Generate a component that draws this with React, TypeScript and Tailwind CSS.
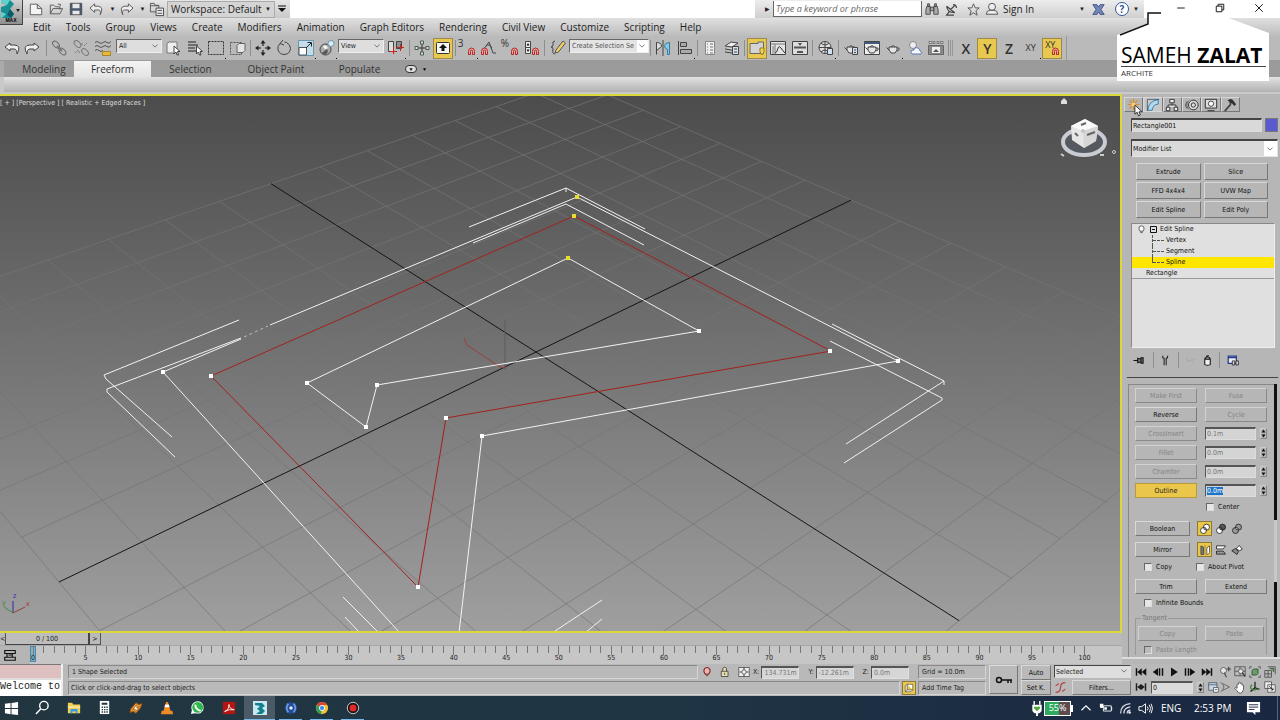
import { ReactNode } from "react";

const MENUS = [
  "Edit",
  "Tools",
  "Group",
  "Views",
  "Create",
  "Modifiers",
  "Animation",
  "Graph Editors",
  "Rendering",
  "Civil View",
  "Customize",
  "Scripting",
  "Help",
];

const ui = "font-['DejaVu_Sans_Condensed','DejaVu_Sans',sans-serif] text-[7px] leading-[10px]";

function Svg({
  children,
  className = "size-[16px]",
  box = "0 0 16 16",
}: {
  children: ReactNode;
  className?: string;
  box?: string;
}) {
  return (
    <svg
      viewBox={box}
      className={`shrink-0 ${className}`}
      fill="none"
      stroke="#444"
      strokeWidth="1"
      aria-hidden="true"
    >
      {children}
    </svg>
  );
}

function ToolButton({
  children,
  label,
  active = false,
  flyout = false,
}: {
  children: ReactNode;
  label: string;
  active?: boolean;
  flyout?: boolean;
}) {
  return (
    <button
      aria-label={label}
      className={`relative flex h-[21px] w-[20px] items-center justify-center ${
        active ? "border border-[#9c8a48] bg-[#e8c84e]" : ""
      }`}
    >
      {children}
      {flyout && <span className="absolute right-0 bottom-0 size-px bg-black" />}
    </button>
  );
}

function Group({ className, children }: { className: string; children: ReactNode }) {
  return <div className={`flex shrink-0 items-center justify-around ${className}`}>{children}</div>;
}

function Sep() {
  return <span className="mx-px h-4 w-px shrink-0 bg-[#8e8e8e]" />;
}

function Chevron({ className = "" }: { className?: string }) {
  return (
    <svg
      viewBox="0 0 8 5"
      className={`pointer-events-none absolute h-[4px] w-[6px] ${className}`}
      fill="none"
      stroke="#555"
    >
      <path d="M.5.5 4 4 7.500.5" />
    </svg>
  );
}

function Combo({
  label,
  value,
  className,
}: {
  label: string;
  value: string;
  className: string;
}) {
  return (
    <div className={`relative shrink-0 ${className}`}>
      <select
        aria-label={label}
        className={`block h-[14px] w-full appearance-none rounded-none border border-[#eee] border-t-[#666] border-l-[#666] bg-[#dedede] pr-3 pl-[2px] text-[#222] ${ui}`}
      >
        <option>{value}</option>
      </select>
      <Chevron className="top-[5px] right-[4px]" />
    </div>
  );
}

/* ---------- title bar ---------- */

function TitleBar() {
  return (
    <header className="flex h-[18px] shrink-0 bg-white font-['Open_Sans',sans-serif] text-[10px] leading-[16px] text-[#222]">
      <div className="flex w-[290px] shrink-0 items-center bg-linear-to-b from-[#e6e6e6] to-[#c9c9c9] pl-[29px]">
        <button aria-label="New" className="w-[20px]">
          <Svg className="size-[14px]">
            <path d="M1.500 2.500h8l5 5v7h-13zM9.500 2.500v5h5" fill="#f4f4f4" stroke="#555" />
          </Svg>
        </button>
        <button aria-label="Open" className="w-[20px]">
          <Svg className="size-[14px]">
            <path d="M1.500 13.500v-10h4l2 2h5v3M1.500 13.500l3-6h11l-3 6zM10 2.500h3v2" stroke="#555" />
          </Svg>
        </button>
        <button aria-label="Save" className="w-[20px]">
          <Svg className="size-[14px]">
            <path d="M1.500 1.500h13v13h-13z" fill="#4a5a72" />
            <path d="M4 2h8v5H4zM4 10h8v4H4z" fill="#e8e8e8" stroke="none" />
          </Svg>
        </button>
        <button aria-label="Undo" className="w-[17px]">
          <Svg className="size-[15px]">
            <path d="m6 2-5 4.500 5 4.500V8.500h4q3 0 2 5 4-8-2-9H6z" fill="#eee" stroke="#555" />
          </Svg>
        </button>
        <span className="w-[13px] text-center text-[6px]">▼</span>
        <button aria-label="Redo" className="w-[17px]">
          <Svg className="size-[15px]">
            <path d="m10 2 5 4.500-5 4.500V8.500H6q-3 0-2 5-4-8 2-9h4z" fill="#eee" stroke="#555" />
          </Svg>
        </button>
        <span className="w-[13px] text-center text-[6px]">▼</span>
        <button aria-label="Project folder" className="w-[18px]">
          <Svg className="size-[15px]">
            <path d="M1.500 1.500h4l1 2h4v7h-9zM1.500 4h9" stroke="#555" />
            <path d="M7.500 6.500h8v8h-8zM9 9h5M9 12h5" fill="#eee" stroke="#444" />
          </Svg>
        </button>
        <button className="flex h-[17px] w-[108px] items-center justify-between border border-[#aaa] bg-[#d4d4d4] px-[3px]">
          Workspace: Default <span className="text-[6px]">▼</span>
        </button>
        <button aria-label="Customize quick access" className="w-[14px]">
          <Svg className="mx-auto size-[8px]" box="0 0 8 8">
            <path d="M0 1h8" stroke="#111" />
            <path d="M0 3h8L4 7z" fill="#111" stroke="none" />
          </Svg>
        </button>
      </div>
      <div className="flex-1" />
      <div className="flex w-[389px] shrink-0 items-center bg-linear-to-b from-[#ededed] to-[#cfcfcf]">
        <button aria-label="Collapse search" className="w-[18px] pl-[6px] text-[6px]">
          ▶
        </button>
        <input
          aria-label="Search"
          placeholder="Type a keyword or phrase"
          className="h-[16px] w-[149px] border border-t-0 border-[#666] bg-white px-[2px] text-[9px] italic placeholder:text-[#666]"
        />
        <button aria-label="Find" className="w-[21px] pl-[3px]">
          <Svg className="size-[14px]">
            <path d="M2 5h4v9H1V9zM10 5h4l1 4v5h-5zM6 6h4v4H6zM3 2h2v3H3zM11 2h2v3h-2z" fill="#aaa" />
          </Svg>
        </button>
        <button aria-label="Communication center" className="w-[20px] pl-[2px]">
          <Svg className="size-[13px]">
            <path d="M2 4q1 8 10 8M2 4l10 8M7 8l5-5M5 11l-3 4h9M10 2q4 0 4 4" strokeWidth="1.500" />
          </Svg>
        </button>
        <button aria-label="Favorites" className="w-[20px]">
          <Svg className="mx-auto size-[13px]">
            <path d="m8 1 2 5h5l-4 3.500 1.500 5.500L8 12l-4.500 3L5 9.500 1 6h5z" />
          </Svg>
        </button>
        <button className="flex items-center gap-[4px] pl-[2px]">
          <Svg className="size-[14px]">
            <circle cx="8" cy="5.500" r="4" fill="#eee" />
            <path d="M1.500 14q0-4 4-4.500h5q4 .5 4 4.500z" fill="#eee" />
          </Svg>
          Sign In
        </button>
        <span className="ml-auto text-[6px]">▼</span>
        <button aria-label="Exchange apps" className="w-[26px]">
          <Svg className="mx-auto size-[13px]">
            <path d="M1 2h5l2 3 2-3h5l-4 6 4 6h-5l-2-3-2 3H1l4-6z" fill="#7486b8" stroke="#334778" />
          </Svg>
        </button>
        <button
          aria-label="Help"
          className="mx-[4px] size-[14px] rounded-full border border-[#31559b] bg-white text-[10px] leading-[12px] font-bold text-[#31559b]"
        >
          ?
        </button>
        <span className="w-[11px] text-[6px]">▼</span>
      </div>
      <div className="flex w-[136px] shrink-0 items-start pt-[3px] pl-[32px]">
        <button aria-label="Minimize" className="w-[39px]">
          <Svg className="size-[10px]">
            <path d="M2 8h12" stroke="#111" strokeWidth="1.500" />
          </Svg>
        </button>
        <button aria-label="Restore" className="w-[39px]">
          <Svg className="size-[10px]">
            <path d="M2 5h9v9H2zM5 5V2h9v9h-3" stroke="#111" strokeWidth="1.500" />
          </Svg>
        </button>
        <button aria-label="Close">
          <Svg className="size-[10px]">
            <path d="m2 2 12 12M14 2 2 14" stroke="#111" strokeWidth="1.500" />
          </Svg>
        </button>
      </div>
    </header>
  );
}

function AppButton() {
  return (
    <button
      aria-label="Application menu"
      className="absolute top-0 left-0 z-10 flex h-[25px] w-[23px] flex-col items-center border-r border-b border-[#444] bg-linear-to-b from-[#d0d0d0] to-[#8f8f8f]"
    >
      <Svg className="h-[18px] w-[22px]" box="0 0 22 18">
        <path d="M1 0h9l4 4-4 5 4 5-3 4H2l-1-3 5-1-5-2V7l6-2-6-2z" fill="#178f92" stroke="none" />
        <path d="M1 0h9l-3 5-6-2zM1 12l5 2-4 4-1-1z" fill="#5fd0cc" stroke="none" />
        <path d="m10 9 4 5-3 4-4-3z" fill="#0b5c66" stroke="none" />
        <path d="M16 9h4l-2 3z" fill="#222" stroke="none" />
      </Svg>
      <span className="font-['Liberation_Sans',sans-serif] text-[5px] leading-[5px] font-bold text-black">
        MAX
      </span>
    </button>
  );
}

/* ---------- main toolbar ---------- */

const teapot = (
  <path
    d="M4 7h8q1 3-2 6H6Q3 10 4 7zM6 7q2-3 4 0M12 8q3-1 2 2l-2 1M4 10 1.500 7.500"
    fill="#e4e4e4"
  />
);

const magnet = (
  <path
    d="M8.500 14.500v-3q0-3.500 3-3.500t3 3.500v3h-2v-3q0-1.500-1-1.500t-1 1.500v3z"
    fill="#f3a6a6"
    stroke="#b32626"
  />
);

function Toolbar() {
  return (
    <div className="flex h-[25px] shrink-0 items-center border-b border-[#999] bg-[#bababa] pl-[2px]">
      <Group className="w-[40px]">
        <ToolButton label="Undo">
          <Svg>
            <path d="m6 3-5 4 5 4V9h4q3 0 3 5 5-9-3-9H6z" fill="#eee" />
          </Svg>
        </ToolButton>
        <ToolButton label="Redo">
          <Svg>
            <path d="m10 3 5 4-5 4V9H6q-3 0-3 5-5-9 3-9h4z" fill="#eee" />
          </Svg>
        </ToolButton>
      </Group>
      <span className="w-[3px]" />
      <Sep />
      <Group className="w-[66px]">
        <ToolButton label="Select and link">
          <Svg>
            <ellipse cx="5" cy="4.500" rx="4" ry="2.500" transform="rotate(45 5 4.500)" stroke="#666" />
            <ellipse cx="11.500" cy="11.500" rx="4" ry="2.500" transform="rotate(45 11.500 11.500)" stroke="#666" />
            <path d="m6 6 5 5" stroke="#777" strokeWidth="2" />
          </Svg>
        </ToolButton>
        <ToolButton label="Unlink selection">
          <Svg>
            <ellipse cx="4.500" cy="4" rx="4" ry="2.500" transform="rotate(45 4.500 4)" stroke="#777" />
            <ellipse cx="12" cy="12" rx="4" ry="2.500" transform="rotate(45 12 12)" stroke="#777" />
            <path d="M9 5V2M11 6l3-3M5 10l-3 3M6 11v3" stroke="#777" strokeDasharray="2 1" />
          </Svg>
        </ToolButton>
        <ToolButton label="Bind to space warp">
          <Svg>
            <path d="M0 2.500q2-2 4 0t4 0 4 0 4-1M0 6.500q2-2 4 0t4 0 4 0 4-1M0 10.500q2-2 4 0t4 0" stroke="#555" />
            <path d="M7.500 11.500h8v4h-8z" fill="#e9b93c" stroke="#a8842a" />
          </Svg>
        </ToolButton>
      </Group>
      <span className="w-[2px]" />
      <Combo label="Selection filter" value="All" className="w-[46px] pb-[4px]" />
      <Group className="w-[87px]">
        <ToolButton label="Select object">
          <Svg>
            <path d="M2 3.500 4 2h8v9l-2 2H2z" fill="#eee" stroke="#777" />
            <path d="M9 6v8l2-2 1 3h1.500l-1-3.500H15z" fill="#fff" />
          </Svg>
        </ToolButton>
        <ToolButton label="Select by name">
          <Svg>
            <path d="M1 2h8M1 5h10M1 8h7M1 11h8" strokeWidth="1.500" stroke="#555" />
            <path d="M9.500 6v8l2-2 1 3H14l-1-3.500h2.500z" fill="#fff" />
          </Svg>
        </ToolButton>
        <ToolButton label="Rectangular selection" flyout>
          <Svg>
            <path d="M.5 1.500h15v13H.5z" strokeDasharray="2 1" stroke="#333" />
          </Svg>
        </ToolButton>
        <ToolButton label="Window crossing">
          <Svg>
            <path d="M.5 2.500h11v12H.5z" strokeDasharray="2 1" stroke="#555" />
            <path d="M7 5.500 9 3.500h6v7l-2 2H7z" fill="#e4e4e4" stroke="#666" />
          </Svg>
        </ToolButton>
      </Group>
      <Sep />
      <Group className="w-[86px]">
        <ToolButton label="Move">
          <Svg>
            <path d="M8 3v3M8 10v3M3 8h3M10 8h3" strokeWidth="1.500" />
            <path d="m8 0 2.500 3.500h-5zM8 16l2.500-3.500h-5zM0 8l3.500-2.500v5zM16 8l-3.500-2.500v5z" fill="#222" stroke="none" />
          </Svg>
        </ToolButton>
        <ToolButton label="Rotate">
          <Svg>
            <path d="M4 3.500q-3 3-2 6.500 2 5 7 4.500 5-1 5.500-6 0-4-4-6l-2-.5M7 0 4 3.500 8 5" stroke="#444" />
          </Svg>
        </ToolButton>
        <ToolButton label="Scale" flyout>
          <Svg>
            <path d="M.5.5h15v15H.5z" fill="#c3dcea" stroke="#6b97ae" />
            <path d="M1 7.500h7.500V15H1z" fill="#fff" stroke="#555" />
            <path d="m8 8 5-5M9.500 2.500h4v4" stroke="#222" />
          </Svg>
        </ToolButton>
        <ToolButton label="Place" flyout>
          <Svg>
            <circle cx="6.500" cy="9.500" r="5.500" fill="#aaa" stroke="#444" />
            <path d="M4 6q3-2 5 2-4 3-5-2z" fill="#f5f5f5" stroke="none" />
            <path d="M8 9q2 3-1 5-3 1-4-1z" fill="#555" stroke="none" />
            <circle cx="12" cy="3.500" r="3" fill="#d9ecf5" stroke="#6b97ae" />
          </Svg>
        </ToolButton>
      </Group>
      <Combo label="Reference coordinate system" value="View" className="w-[46px] pb-[4px]" />
      <Group className="w-[24px]">
        <ToolButton label="Pivot center" flyout>
          <Svg>
            <path d="M.5 1.500h5v10h-5z" fill="#ddd" />
            <path d="M8.500 1.500h5v7h-5z" fill="#8f8f8f" />
            <path d="M5.500 7v7M2 11.500h7M12.500 4v7M9 7.500h7" stroke="#c22" />
          </Svg>
        </ToolButton>
      </Group>
      <Sep />
      <Group className="w-[43px]">
        <ToolButton label="Manipulate">
          <Svg>
            <path d="M8 3v10M3 8h10" stroke="#333" />
            <path d="M6.500 1h3v3h-3zM6.500 12h3v3h-3zM1 6.500h3v3H1zM12 6.500h3v3h-3z" fill="#ddd" stroke="#456145" />
          </Svg>
        </ToolButton>
        <ToolButton label="Keyboard shortcut override" active>
          <Svg>
            <rect x="1.500" y="2.500" width="13" height="11" rx="1" fill="#f5f5f5" stroke="#333" />
            <path d="m8 4 4 4H9.500v3h-3V8H4z" fill="#111" stroke="none" />
          </Svg>
        </ToolButton>
      </Group>
      <Sep />
      <Group className="w-[86px] font-['Open_Sans',sans-serif] text-[10px] text-[#333]">
        <ToolButton label="Snaps toggle" flyout>
          <span className="absolute top-[-2px] left-0">3</span>
          <Svg>{magnet}</Svg>
        </ToolButton>
        <ToolButton label="Angle snap">
          <Svg>
            <path d="m2 10 6-8 4 11h3M5 6q3-3 6 2" />
            <g transform="translate(-8 0)">{magnet}</g>
          </Svg>
        </ToolButton>
        <ToolButton label="Percent snap">
          <span className="absolute top-[-2px] left-0">%</span>
          <Svg>{magnet}</Svg>
        </ToolButton>
        <ToolButton label="Spinner snap">
          <Svg>
            <path d="M1.500 1.500h5v6h-5zM1.500 7.500h5v6h-5z" fill="#eee" />
            <path d="m4 3 1.500 2.500h-3zM4 12 2.500 9.500h3z" fill="#111" stroke="none" />
            {magnet}
          </Svg>
        </ToolButton>
      </Group>
      <Sep />
      <Group className="w-[23px]">
        <ToolButton label="Edit named selection sets">
          <Svg>
            <path d="M5 1Q2 1 3 5q0 2-2 2 2 0 2 2-1 5 2 5" />
            <path d="m6 10 7-9 2.500 2-7 9L5 13z" fill="#f0cf60" stroke="#555" />
          </Svg>
        </ToolButton>
      </Group>
      <div className="relative w-[80px] pb-[4px]">
        <input
          aria-label="Named selection sets"
          placeholder="Create Selection Se"
          className={`block h-[14px] w-full border border-[#eee] border-t-[#666] border-l-[#666] bg-[#e4e4e4] pr-3 pl-[2px] placeholder:text-[#555] ${ui}`}
        />
        <span className="absolute top-px right-px h-[12px] w-[11px] bg-white" />
        <Chevron className="top-[5px] right-[4px]" />
      </div>
      <Sep />
      <Group className="w-[44px]">
        <ToolButton label="Mirror">
          <Svg>
            <path d="M1.500 2.500v12M1.500 2.500q5 0 5 4l-5 4" fill="#ddd" />
            <path d="M14.500 2.500v12h-2v-5q-3-1-3-4 1-3 5-3z" fill="#8cc7e2" stroke="#2e7da3" />
            <path d="M8 0v16" />
          </Svg>
        </ToolButton>
        <ToolButton label="Align" flyout>
          <Svg>
            <path d="M1.500 1v14" />
            <path d="M3.500 2.500h6v4h-6zM3.500 9.500h11v4h-11z" fill="#aaa" />
          </Svg>
        </ToolButton>
      </Group>
      <Sep />
      <Group className="w-[44px]">
        <ToolButton label="Scene explorer">
          <Svg>
            <path d="M3.500 1.500h9v13h-9z" fill="#eee" stroke="#888" />
            <path d="M5 4h1M5 7h1M5 10h1M5 13h1M8 4h3M8 7h3M8 10h3M8 13h3" stroke="#777" />
          </Svg>
        </ToolButton>
        <ToolButton label="Layer explorer">
          <Svg>
            <path d="m1 6 6-4 7 1-6 4zM1 9l7 1 3-2M1 12l7 1" fill="#eee" />
            <path d="M8.500 6.500h6v8h-6zM10 9h3M10 12h3" fill="#d5dff0" />
          </Svg>
        </ToolButton>
      </Group>
      <Sep />
      <Group className="w-[65px]">
        <ToolButton label="Toggle ribbon" active>
          <Svg>
            <path d="M1 3.500h8V2h5.500v11.500H1z" fill="#d4d4d4" stroke="#666" />
            <path d="M11 8h4v4l-2 3-2-3z" fill="#f2d657" stroke="#8e7a22" />
          </Svg>
        </ToolButton>
        <ToolButton label="Curve editor">
          <Svg>
            <path d="M.5 1.500h15v13H.5z" fill="#e4e4e4" />
            <path d="M1 4h14M5 4v10M3 6v8" stroke="#777" />
            <path d="M5 13q2 0 3-5 1-3 3 0t4 5" stroke="#333" />
          </Svg>
        </ToolButton>
        <ToolButton label="Schematic view">
          <Svg>
            <path d="M.5 1.500h15v13H.5z" fill="#ddd" />
            <path d="M2 6.500h12v2H2zM5 11h6v2H5zM6 3h4L8 6z" fill="#555" stroke="none" />
          </Svg>
        </ToolButton>
      </Group>
      <Sep />
      <Group className="w-[23px]">
        <ToolButton label="Material editor" flyout>
          <Svg>
            <circle cx="7" cy="7.500" r="6" fill="#ddd" />
            <path d="M1 7.500h12M7 1v13M3 3q4 4 8 0M3 12q4-4 8 0" />
            <path d="M9.500 8.500h5v6h-5z" fill="#cfe0f2" />
          </Svg>
        </ToolButton>
      </Group>
      <Sep />
      <Group className="w-[107px]">
        <ToolButton label="Render setup">
          <Svg>
            {teapot}
            <path d="M9.500 7.500h5v7h-5zM11 10h2M11 12.500h2" fill="#cfe0f2" />
          </Svg>
        </ToolButton>
        <ToolButton label="Rendered frame window">
          <Svg>
            <path d="M.5 1.500h15v13H.5z" fill="#eee" />
            <path d="M.5 3h15" strokeWidth="2" stroke="#435a7a" />
            {teapot}
          </Svg>
        </ToolButton>
        <ToolButton label="Render production" flyout>
          <Svg>{teapot}</Svg>
        </ToolButton>
        <ToolButton label="Render in cloud">
          <Svg>
            <circle cx="6" cy="5" r="3.500" fill="#eee" stroke="#888" />
            <path d="M5 14q-3-4 2-4 1-4 4-2 2 1 2 3 3 1 1 3z" fill="#f4f8ff" stroke="#5b79b8" />
          </Svg>
        </ToolButton>
        <ToolButton label="Render gallery">
          <Svg>
            <path d="M.5 5.500h15v9H.5z" fill="#888" stroke="#666" />
            <path d="M1 1.500h3v2H1zM5 1.500h2v2H5zM9 1.500h2v2H9zM12.500 1.500H15v2h-2.500z" fill="#ddd" stroke="#777" />
            <path d="M4 7h8v6H4z" fill="#eee" stroke="none" />
            <path d="m5 12 3-3 3 3z" fill="#555" stroke="none" />
          </Svg>
        </ToolButton>
      </Group>
      <Sep />
      <span className="mr-[2px] h-4 w-[3px] border-x border-[#999]" />
      <Group className="w-[108px] font-['Open_Sans',sans-serif] text-[14px] font-semibold text-[#333]">
        <ToolButton label="Restrict to X">X</ToolButton>
        <ToolButton label="Restrict to Y" active>
          Y
        </ToolButton>
        <ToolButton label="Restrict to Z">Z</ToolButton>
        <ToolButton label="Restrict to XY plane" flyout>
          <span className="text-[9px] font-normal">XY</span>
        </ToolButton>
        <ToolButton label="Snaps use axis constraints" active>
          <span className="absolute top-[-1px] left-[2px] text-[9px] leading-[13px] font-normal">XY</span>
          <Svg>{magnet}</Svg>
        </ToolButton>
      </Group>
      <span className="ml-[3px] h-[24px] w-px bg-[#999]" />
    </div>
  );
}

function Ribbon() {
  const tab = "h-full text-center";
  return (
    <>
      <div className="flex h-[16px] shrink-0 items-stretch border-l-4 border-[#aaa] bg-[#9b9b9b] font-['Open_Sans',sans-serif] text-[10px] leading-[16px] text-[#333]">
        <button className={`${tab} w-[70px] pl-[10px]`}>Modeling</button>
        <button className={`${tab} w-[77px] bg-linear-to-b from-[#f4f4f4] to-[#e4e4e4]`}>Freeform</button>
        <button className={`${tab} w-[79px]`}>Selection</button>
        <button className={`${tab} w-[92px]`}>Object Paint</button>
        <button className={`${tab} w-[75px]`}>Populate</button>
        <button aria-label="Ribbon display" className="flex items-center gap-[5px] pl-[8px] text-[5px] text-black">
          <span className="flex h-[8px] w-[12px] items-center justify-center rounded-sm border border-[#333] bg-[#ddd]">
            ▼
          </span>
          ▼
        </button>
      </div>
      <div className="h-[17px] shrink-0 border-b-2 border-l-4 border-[#c9c9c9] bg-linear-to-b from-[#e2e2e2] to-[#b2b2b2]" />
    </>
  );
}

/* ---------- viewport ---------- */

// Perspective projection of a ground plane point, u and v in grid cells (-7..7).
function project(u: number, v: number) {
  const a = u / 7;
  const b = v / 7;
  const w = 1 - 0.2297 * a - 0.2045 * b;
  return [(536 + 202.8 * a - 489.1 * b) / w, (352 + 126.1 * a + 111 * b) / w];
}

function gridLine(u1: number, v1: number, u2: number, v2: number) {
  const [x1, y1] = project(u1, v1);
  const [x2, y2] = project(u2, v2);
  return `M${x1.toFixed(1)} ${y1.toFixed(1)}L${x2.toFixed(1)} ${y2.toFixed(1)}`;
}

const STEPS = Array.from({ length: 15 }, (_, i) => i - 7);
const GRID = STEPS.filter((n) => n !== 0)
  .map((n) => gridLine(n, -7, n, 7) + gridLine(-7, n, 7, n))
  .join("");
const AXES = gridLine(0, -7, 0, 7) + gridLine(-7, 0, 7, 0);

const KNOTS = [
  [163, 372],
  [211, 376],
  [307, 383],
  [366, 427],
  [377, 385],
  [699, 331],
  [830, 351],
  [898, 361],
  [446, 418],
  [482, 436],
  [418, 587],
];
const FIRST_KNOTS = [
  [577, 197],
  [574, 216],
  [568, 258],
];

function Viewport() {
  return (
    <section className="relative min-h-0 flex-1 overflow-hidden border-y-2 border-r-2 border-[#dcd83c] bg-linear-to-b from-[#4c4c4c] to-[#9f9f9f]">
      <svg
        viewBox="0 96 1120 535"
        preserveAspectRatio="xMidYMid slice"
        className="block h-full w-full"
        fill="none"
        strokeWidth="1"
      >
        <path d={GRID} stroke="#757575" strokeOpacity="0.700" />
        <path d={AXES} stroke="#151515" />
        <path d="M505 320v50" stroke="#5c5c5c" />
        <path d="m464 338 3 7 33 22 6 1" stroke="#9a3f3a" />
        <g stroke="#f2f2f2">
          <path d="m469 227 97-39 79 41M473 243l93-39 78 41M566 188v4" />
          <path d="m239 320-135 55 2 4 66 58M241 338l-134 51v3l68 65" />
          <path d="m832 324 112 57v4M944 381l-98 63M830 341l112 57v2l-98 63" />
          <path d="m343 597 36 36M345 617l15 16M602 600l-50 33M602 619l-17 14" />
          <path d="m400 633-237-261 78-33M270 325l307-128 321 164-416 75-23 197" />
          <path d="m244 337 24-11" strokeDasharray="3 3" strokeOpacity=".6" />
          <path d="m568 258 131 73-322 54-11 42-59-44z" />
        </g>
        <path d="m574 216 257 135-385 67-28 169-207-211z" stroke="#a3211c" />
        {KNOTS.map(([x, y]) => (
          <rect key={`${x}-${y}`} x={x - 2} y={y - 2} width="4" height="4" fill="#fff" />
        ))}
        {FIRST_KNOTS.map(([x, y]) => (
          <rect key={`${x}-${y}`} x={x - 2} y={y - 2} width="4" height="4" fill="#e8dc2c" />
        ))}
      </svg>
      <p className={`absolute top-[2px] left-0 text-[#ddd] ${ui}`}>
        [ + ] [Perspective ] [ Realistic + Edged Faces ]
      </p>
      {/* view cube */}
      <svg viewBox="0 0 66 66" className="absolute top-0 right-0 size-[66px]" fill="none">
        <path d="M7 8V5l3-3 3 3v3z" fill="#ddd" />
        <ellipse cx="30" cy="46" rx="21" ry="13" fill="#555a60" stroke="#c9ccd2" strokeWidth="4" />
        <path d="m17 30 14-7 13 7-2 15-12 7-12-8z" fill="#e6e6e6" />
        <path d="m17 30 12 5 15-5-13-7z" fill="#fafafa" />
        <path d="m29 35 1 17 12-7 2-15z" fill="#d6d6d6" />
        <path d="m27 29 5-2M33 39l8-3M21 37l3 3" stroke="#666" strokeWidth="2" />
        <circle cx="29" cy="35" r="2" fill="#c4c4c4" />
        <circle cx="60" cy="56" r="1.500" stroke="#ccc" />
        <path d="m7 58 3 2M46 59h4" stroke="#ccc" strokeWidth="2" />
      </svg>
      {/* world axis tripod */}
      <svg viewBox="0 0 34 28" className="absolute bottom-[12px] left-0 h-[28px] w-[34px]" fill="none">
        <path d="M13 22V10" stroke="#2c2caa" />
        <path d="m13 22 12-6" stroke="#a03a3a" />
        <path d="m13 22-9-6" stroke="#3b8f3b" />
        <g fontSize="7" fontFamily="DejaVu Sans Condensed, DejaVu Sans, sans-serif">
          <text x="13" y="7" fill="#2c2caa">z</text>
          <text x="26" y="15" fill="#b03030">x</text>
          <text x="2" y="14" fill="#2f8f2f">y</text>
        </g>
      </svg>
    </section>
  );
}

function TimeSlider() {
  return (
    <div className={`flex h-[12px] shrink-0 items-stretch bg-[#b9b9b9] text-[#222] ${ui}`}>
      <button aria-label="Previous frame" className="w-[6px] border-r border-[#555]">
        &lt;
      </button>
      <button className="w-[84px] border-r-2 border-b border-[#444] bg-[#bdbdbd]">0 / 100</button>
      <button aria-label="Next frame" className="w-[11px] border-r border-b border-[#555]">
        &gt;
      </button>
    </div>
  );
}

function TrackBar() {
  const frames = Array.from({ length: 101 }, (_, i) => i);
  return (
    <div className={`flex h-[19px] shrink-0 border-t border-[#a5a5a5] bg-[#c6c6c6] text-[#222] ${ui}`}>
      <button aria-label="Mini curve editor" className="flex w-[30px] items-center bg-[#b5b5b5] pl-[3px]">
        <Svg className="h-[12px] w-[14px]">
          <path d="M1 2h14v4H1zM1 11h14v4H1zM4 6v5M11 6v5M6 8h4" stroke="#111" strokeWidth="1.500" />
        </Svg>
      </button>
      <div className="relative mr-[37px] ml-[3px] flex flex-1 justify-between">
        <span className="absolute top-0 left-[-3px] h-[16px] w-[6px] border border-[#4e86a3] bg-[#7fb3cf]" />
        {frames.map((f) => (
          <div key={f} className="relative flex w-0 flex-col items-center">
            <span className={`w-px bg-[#777] ${f % 5 === 0 ? "h-[9px]" : "h-[7px]"}`} />
            {f % 5 === 0 && <span className="-mt-px leading-[9px]">{f}</span>}
          </div>
        ))}
      </div>
    </div>
  );
}

/* ---------- command panel ---------- */

function PanelButton({
  children,
  className = "",
  state = "normal",
}: {
  children: ReactNode;
  className?: string;
  state?: "normal" | "disabled" | "active";
}) {
  const tone =
    state === "active"
      ? "bg-[#eac64a] text-[#222] border-[#b89a3a]"
      : state === "disabled"
        ? "text-[#858585] border-t-[#d2d2d2] border-l-[#d2d2d2] border-r-[#8a8a8a] border-b-[#8a8a8a]"
        : "text-[#111] border-t-[#d8d8d8] border-l-[#d8d8d8] border-r-[#777] border-b-[#777]";
  return (
    <button disabled={state === "disabled"} className={`h-[15px] border text-center ${tone} ${className}`}>
      {children}
    </button>
  );
}

function Spinner() {
  return (
    <button aria-label="Adjust value" className="h-[11px] w-[7px] border border-[#ccc] border-r-[#888] border-b-[#888]">
      <svg viewBox="0 0 5 9" className="h-[9px] w-[5px]">
        <path d="m2.500.5 2 3h-4zM2.500 8.500l-2-3h4z" fill="#111" />
      </svg>
    </button>
  );
}

function Check({ label, disabled = false }: { label: string; disabled?: boolean }) {
  return (
    <label className={`flex items-center gap-[4px] ${disabled ? "text-[#858585]" : "text-[#111]"}`}>
      <input
        type="checkbox"
        disabled={disabled}
        className={`size-[8px] appearance-none border border-[#ddd] border-t-[#666] border-l-[#666] ${
          disabled ? "bg-[#bbb]" : "bg-[#e6e6e6]"
        }`}
      />
      {label}
    </label>
  );
}

function CommandTab({ label, active = false, children }: { label: string; active?: boolean; children: ReactNode }) {
  return (
    <button
      role="tab"
      aria-label={label}
      aria-selected={active}
      className={`relative flex h-[15px] flex-1 items-center justify-center border border-[#d8d8d8] border-r-[#777] ${
        active ? "bg-[#c9c9c9]" : "border-b-[#777] bg-[#b6b6b6]"
      }`}
    >
      {children}
    </button>
  );
}

const SPLINE_ROWS = [
  { left: "Make First", right: "Fuse" },
  { left: "Reverse", right: "Cycle", leftState: "normal" as const },
  { left: "CrossInsert", value: "0.1m" },
  { left: "Fillet", value: "0.0m" },
  { left: "Chamfer", value: "0.0m" },
  { left: "Outline", value: "0.0m", leftState: "active" as const },
];

const rings = (a: string, b: string, c: string) => (
  <Svg className="size-[12px]">
    <circle cx="10" cy="5.500" r="4" fill={b} stroke="#111" />
    <circle cx="6" cy="10" r="4" fill={a} stroke="#111" />
    <path d="M6 6q4 0 4 3.500-4 0-4-3.500z" fill={c} stroke="#111" />
  </Svg>
);

function IconToggle({ label, active = false, children }: { label: string; active?: boolean; children: ReactNode }) {
  return (
    <button
      aria-label={label}
      className={`flex h-[15px] w-[15px] items-center justify-center ${
        active ? "border border-[#8b7a3a] bg-[#eac64a]" : ""
      }`}
    >
      {children}
    </button>
  );
}

function CommandPanel() {
  const stackRow = "flex h-[11px] items-center leading-[11px]";
  return (
    <aside className={`flex w-[158px] shrink-0 flex-col bg-[#b6b6b6] text-[#111] ${ui}`}>
      <div role="tablist" className="mt-[3px] mr-[40px] ml-[2px] flex h-[15px] shrink-0">
        <CommandTab label="Create">
          <Svg className="size-[13px]">
            <path d="M8 1v14M1 8h14M3 3l10 10M13 3 3 13" stroke="#d98a22" strokeWidth="1.500" />
            <circle cx="8" cy="8" r="2.500" fill="#f7cf7c" stroke="none" />
          </Svg>
          <svg viewBox="0 0 10 14" className="absolute top-[6px] left-[9px] z-10 h-[13px] w-[9px]">
            <path d="M1 1v10l2.500-2 1.500 4 2-1-1.500-3.500H9z" fill="#fff" stroke="#222" />
          </svg>
        </CommandTab>
        <CommandTab label="Modify" active>
          <Svg className="size-[14px]">
            <path d="M2 14Q3 3 14 2v5Q8 7 7 14z" fill="#b5d9ec" stroke="#2b78a8" />
            <path d="M1.500 15V1.500H15" stroke="#456" />
          </Svg>
        </CommandTab>
        <CommandTab label="Hierarchy">
          <Svg className="size-[14px]">
            <path d="M5.500 1.500h5v4h-5zM1.500 10.500h4v4h-4zM10.500 10.500h4v4h-4zM8 6v2M3.500 10V8h9v2" fill="#eee" stroke="#222" />
          </Svg>
        </CommandTab>
        <CommandTab label="Motion">
          <Svg className="size-[14px]">
            <circle cx="9.500" cy="8" r="5.500" fill="#ddd" stroke="#222" />
            <circle cx="9.500" cy="8" r="2.500" stroke="#222" />
            <path d="M4 3Q0 8 4 13M2 4Q-1 8 2 12" stroke="#555" />
          </Svg>
        </CommandTab>
        <CommandTab label="Display">
          <Svg className="size-[14px]">
            <path d="M1.500 1.500h13v10h-13zM4 14.500h8" fill="#ddd" stroke="#222" />
            <circle cx="8" cy="6.500" r="3" fill="#fff" stroke="#333" />
          </Svg>
        </CommandTab>
        <CommandTab label="Utilities">
          <Svg className="size-[14px]">
            <path d="m2 15 7-8" stroke="#444" strokeWidth="2" />
            <path d="M5 3q3-3 6-1l4 5-2 2-3-3-2 1-1-3z" fill="#333" stroke="none" />
          </Svg>
        </CommandTab>
      </div>

      <div className="mt-[6px] mr-[2px] ml-[9px] flex h-[14px] shrink-0 justify-between">
        <input
          aria-label="Object name"
          defaultValue="Rectangle001"
          className="w-[131px] border border-[#ddd] border-t-2 border-t-[#444] border-l-[#444] bg-[#d9d9d9] pl-px"
        />
        <button aria-label="Object color" className="w-[13px] border border-[#777] bg-[#5a5ad0]" />
      </div>
      <div className="relative mt-[7px] mr-[2px] ml-[9px] shrink-0">
        <select
          aria-label="Modifier list"
          className="block h-[18px] w-full appearance-none rounded-none border border-[#e4e4e4] border-t-2 border-t-[#444] border-l-[#444] bg-[#dadada] pl-px"
        >
          <option>Modifier List</option>
        </select>
        <span className="absolute top-[2px] right-px h-[15px] w-[13px] bg-white" />
        <Chevron className="top-[8px] right-[5px]" />
      </div>

      <div className="mt-[6px] mr-[12px] ml-[14px] grid shrink-0 grid-cols-2 gap-x-[3px] gap-y-[2px]">
        {["Extrude", "Slice", "FFD 4x4x4", "UVW Map", "Edit Spline", "Edit Poly"].map((m) => (
          <PanelButton key={m} className="h-[17px]">
            {m}
          </PanelButton>
        ))}
      </div>

      <div className="mt-[5px] mr-[5px] ml-[9px] h-[125px] shrink-0 border border-[#eee] border-t-[#888] border-l-[#888] bg-[#e0e0e0]">
        <div className={`${stackRow} gap-[3px] pl-[5px]`}>
          <Svg className="mr-px size-[9px]">
            <path d="M5 11q0-2-1.500-3.500-1-6 4.500-6t4.500 6Q11 9 11 11zM6 13.500h4" fill="#fff" strokeWidth="1.500" />
          </Svg>
          <Svg className="size-[7px]" box="0 0 7 7">
            <path d="M.5.5h6v6h-6zM2 3.500h3" stroke="#111" />
          </Svg>
          Edit Spline
        </div>
        {["Vertex", "Segment", "Spline"].map((s) => (
          <div key={s} className={`${stackRow} pl-[20px] ${s === "Spline" ? "bg-[#ffe500]" : ""}`}>
            <span className={`border-l border-dashed border-[#555] ${s === "Spline" ? "-mt-[5px] h-[6px]" : "h-full"}`} />
            <span className="mr-[2px] w-[11px] border-t border-dashed border-[#555]" />
            {s}
          </div>
        ))}
        <div className={`${stackRow} border-b border-[#999] pl-[14px]`}>Rectangle</div>
      </div>

      <div className="mt-[4px] mr-[40px] ml-[10px] flex h-[16px] shrink-0 items-center justify-between">
        <button aria-label="Pin stack">
          <Svg className="h-[11px] w-[14px]">
            <path d="M0 8h6M6 4v8M6 5.500h5v5H6zM11 4h3v8h-3z" fill="#777" stroke="#111" strokeWidth="1.500" />
          </Svg>
        </button>
        <Sep />
        <button aria-label="Show end result">
          <Svg className="size-[11px]">
            <path d="M4 1v3l2 1v10M11 1v3L9 5v10" stroke="#222" strokeWidth="1.500" />
          </Svg>
        </button>
        <Sep />
        <button aria-label="Make unique" disabled>
          <Svg className="size-[10px]">
            <path d="m1 5 3 6 3-4 3 4 4-6" stroke="#888" strokeDasharray="2 2" />
          </Svg>
        </button>
        <button aria-label="Remove modifier">
          <Svg className="size-[11px]">
            <path d="M4 6h8v8q-4 2-8 0zM4 5q4-4 8 0M6 2l4-1" fill="#eee" stroke="#111" strokeWidth="1.500" />
          </Svg>
        </button>
        <Sep />
        <button aria-label="Configure modifier sets">
          <Svg className="size-[13px]">
            <path d="M1.500 2.500h10v9h-10zM1.500 4.500h10" fill="#eee" stroke="#223a8c" strokeWidth="1.500" />
            <path d="M6.500 8.500h3v5h-3zM11 8.500h3v5h-3z" fill="#ddd" stroke="#222" />
          </Svg>
        </button>
      </div>
      <div className="mt-[9px] mr-[2px] ml-[5px] h-px shrink-0 border-b border-[#444]" />

      <div className="mt-[6px] ml-[6px] flex min-h-0 flex-1">
        <div className="min-w-0 flex-1 border-t border-l border-[#888] pr-[7px] pl-[6px]">
          <div className="mt-[3px] flex flex-col gap-[4px]">
            {SPLINE_ROWS.map((r) => (
              <div key={r.left} className="flex items-center gap-[8px]">
                <PanelButton className="w-[62px]" state={r.leftState ?? "disabled"}>
                  {r.left}
                </PanelButton>
                {r.right ? (
                  <PanelButton className="w-[62px]" state="disabled">
                    {r.right}
                  </PanelButton>
                ) : (
                  <div className="flex items-center gap-[4px]">
                    <input
                      aria-label={`${r.left} amount`}
                      defaultValue={r.value}
                      autoFocus={r.left === "Outline"}
                      onFocus={(e) => e.target.select()}
                      className="h-[13px] w-[51px] border border-[#ddd] border-t-2 border-t-[#555] border-l-[#555] bg-[#d4d4d4] pl-px text-[#777] outline-none selection:bg-[#1b74c9] selection:text-white"
                    />
                    <Spinner />
                  </div>
                )}
              </div>
            ))}
          </div>
          <div className="mt-[4px] pl-[71px]">
            <Check label="Center" />
          </div>
          <div className="mt-[9px] flex items-center gap-[7px]">
            <PanelButton className="w-[55px]">Boolean</PanelButton>
            <div className="flex gap-px">
              <IconToggle label="Union" active>
                {rings("#fff", "#fff", "#fff")}
              </IconToggle>
              <IconToggle label="Subtraction">{rings("#fff", "#555", "#888")}</IconToggle>
              <IconToggle label="Intersection">{rings("#999", "#999", "#fff")}</IconToggle>
            </div>
          </div>
          <div className="mt-[6px] flex items-center gap-[7px]">
            <PanelButton className="w-[55px]">Mirror</PanelButton>
            <div className="flex gap-px">
              <IconToggle label="Mirror horizontally" active>
                <Svg className="size-[12px]">
                  <path d="M2.500 2.500 6 4v10H2.500z" fill="#777" />
                  <path d="M8 1v14" stroke="#8b7a3a" />
                  <path d="M14 2.500 10.500 5v9q3.500 0 3.500-3z" fill="#fff" />
                </Svg>
              </IconToggle>
              <IconToggle label="Mirror vertically">
                <Svg className="size-[12px]">
                  <path d="M2 2.500h12l-3 4H2z" fill="#fff" stroke="#111" />
                  <path d="M2 13.500h12l-3-4H2z" fill="#999" stroke="#111" />
                </Svg>
              </IconToggle>
              <IconToggle label="Mirror both">
                <Svg className="size-[12px]">
                  <path d="m7 6 4-4 4 5-4 2z" fill="#fff" stroke="#111" />
                  <path d="m1 9 5-3 4 4-2 4z" fill="#888" stroke="#111" />
                </Svg>
              </IconToggle>
            </div>
          </div>
          <div className="mt-[5px] flex gap-[24px] pl-[9px]">
            <Check label="Copy" />
            <Check label="About Pivot" />
          </div>
          <div className="mt-[7px] flex gap-[8px]">
            <PanelButton className="w-[62px]">Trim</PanelButton>
            <PanelButton className="w-[62px]">Extend</PanelButton>
          </div>
          <div className="mt-[4px] pl-[9px]">
            <Check label="Infinite Bounds" />
          </div>
          <fieldset className="mt-[5px] border border-b-0 border-[#999] px-[2px]">
            <legend className="ml-[3px] px-px text-[#777]">Tangent</legend>
            <div className="mt-[3px] flex gap-[8px]">
              <PanelButton className="flex-1" state="disabled">
                Copy
              </PanelButton>
              <PanelButton className="flex-1" state="disabled">
                Paste
              </PanelButton>
            </div>
            <div className="mt-[4px] pl-[6px]">
              <Check label="Paste Length" disabled />
            </div>
          </fieldset>
        </div>
        <div className="mr-[3px] flex w-[3px] flex-col bg-[#111]">
          <span className="mt-[136px] h-[62px] bg-[#c8c8c8]" />
        </div>
      </div>
      <div className="mb-[5px] h-[2px] shrink-0 bg-[#ddd]" />
    </aside>
  );
}

/* ---------- status bar ---------- */

function Coord({ axis, value }: { axis: string; value: string }) {
  return (
    <label className="flex items-center gap-[2px]">
      {axis}:
      <input
        defaultValue={value}
        className="h-[13px] w-[38px] border border-[#e0e0e0] border-t-2 border-t-[#555] border-l-[#555] bg-[#d6d6d6] pl-[2px] text-[#777]"
      />
    </label>
  );
}

const PLAY_ICONS = [
  { label: "Go to start", d: "M1 3h2v10H1zM9 3v10L3 8zM15 3v10L9 8z" },
  { label: "Previous frame", d: "M8 3v10L1 8zM9 3h2v10H9zM13 3h2v10h-2z" },
  { label: "Play", d: "M4 2v12l9-6z" },
  { label: "Next frame", d: "M8 3v10l7-5zM1 3h2v10H1zM5 3h2v10H5z" },
  { label: "Go to end", d: "M13 3h2v10h-2zM7 3v10l6-5zM1 3v10l6-5z" },
];

function StatusBar() {
  const sunk = "border border-[#d6d6d6] border-t-[#888] border-l-[#888]";
  return (
    <div className={`flex h-[32px] shrink-0 bg-[#b9b9b9] text-[#222] ${ui}`}>
      <div className="flex w-[63px] shrink-0 flex-col border-r-2 border-[#eee] font-['Liberation_Mono',monospace] text-[10px]">
        <div className="h-[14px] border-t border-[#777] bg-[#dfc0c0]" />
        <div className="h-[18px] border-t-2 border-[#ddd] bg-white leading-[14px] whitespace-nowrap">
          Welcome to
        </div>
      </div>
      <div className="ml-[5px] flex min-w-0 flex-1 flex-col justify-between py-px">
        <div className="flex items-center">
          <p className={`h-[14px] flex-1 pl-[3px] leading-[13px] ${sunk}`}>1 Shape Selected</p>
          <div className="flex w-[55px] shrink-0 items-center justify-around">
            <button aria-label="Adaptive degradation">
              <Svg className="size-[12px]">
                <path d="M6 11Q3 8 4 5q1-3 4-3t4 3-2 6zM7 13h2" fill="#f0b3b3" stroke="#7a2222" strokeWidth="1.500" />
              </Svg>
            </button>
            <button aria-label="Selection lock">
              <Svg className="size-[12px]">
                <path d="M3 7h9v7H3zM5 7V3q3-3 5 0v4M7.500 9v3" fill="#e6ddb0" stroke="#333" />
              </Svg>
            </button>
            <button aria-label="Absolute mode">
              <Svg className="size-[12px]">
                <path d="M1 2h14v12H1z" fill="#eee" />
                <circle cx="8" cy="8" r="3" />
                <path d="M8 2v3M8 11v3M2 8h3M11 8h3" strokeWidth="1.500" />
              </Svg>
            </button>
          </div>
          <div className="flex w-[156px] shrink-0 justify-between">
            <Coord axis="X" value="134.731m" />
            <Coord axis="Y" value="-12.261m" />
            <Coord axis="Z" value="0.0m" />
          </div>
          <p className={`ml-[9px] h-[14px] w-[68px] shrink-0 pl-[3px] leading-[13px] ${sunk}`}>Grid = 10.0m</p>
        </div>
        <div className="flex items-center">
          <p className={`h-[14px] flex-1 pl-[2px] leading-[13px] ${sunk}`}>
            Click or click-and-drag to select objects
          </p>
          <button
            aria-label="Time tag"
            className="mx-[2px] flex size-[14px] items-center justify-center border border-[#8b7a3a] bg-[#e8c84e]"
          >
            <Svg className="size-[10px]">
              <path d="M2 4.500 5 2h9v9l-3 3H2zM5 2v9h9M5 11l-3 3" fill="#fff" />
            </Svg>
          </button>
          <button className={`h-[14px] w-[68px] shrink-0 pl-[3px] text-left leading-[12px] ${sunk}`}>Add Time Tag</button>
        </div>
      </div>
      <div className="ml-[3px] flex shrink-0 gap-[3px] pt-px">
        <button
          aria-label="Set keys"
          className="flex h-[29px] w-[29px] items-center justify-center border border-[#ddd] border-r-[#777] border-b-[#777]"
        >
          <svg viewBox="0 0 18 8" className="h-[8px] w-[18px]" fill="none" stroke="#111" strokeWidth="1.500">
            <circle cx="4" cy="4" r="2.500" />
            <path d="M7 4h10M13 4v3M16 4v3" />
          </svg>
        </button>
        <div className="flex w-[30px] flex-col">
          <PanelButton className="h-[15px]">Auto</PanelButton>
          <PanelButton className="h-[15px]">Set K.</PanelButton>
        </div>
        <div className="flex w-[77px] flex-col">
          <div className="relative">
            <select
              aria-label="Key filter set"
              className="block h-[13px] w-full appearance-none rounded-none border border-[#ddd] border-t-[#444] border-l-[#444] bg-[#dedede] pl-px"
            >
              <option>Selected</option>
            </select>
            <Chevron className="top-[4px] right-[4px]" />
          </div>
          <div className="flex gap-[4px] pt-[2px]">
            <button aria-label="Default tangents" className="w-[14px]">
              <Svg className="size-[13px]">
                <path d="M2 14q6 0 6-6t6-6M2 6l4-3M10 13l4-3" stroke="#b24444" strokeWidth="1.500" />
              </Svg>
            </button>
            <PanelButton className="flex-1">Filters...</PanelButton>
          </div>
        </div>
      </div>
      <div className="flex w-[86px] shrink-0 flex-col">
        <div className="flex h-[16px] items-center justify-around px-[2px]">
          {PLAY_ICONS.map((p) => (
            <button key={p.label} aria-label={p.label}>
              <Svg className="size-[12px]">
                <path d={p.d} fill="#111" stroke="none" />
              </Svg>
            </button>
          ))}
        </div>
        <div className="flex h-[14px] items-center gap-[4px] pl-[4px]">
          <button aria-label="Key mode toggle">
            <Svg className="size-[12px]">
              <path d="M1 3h2v10H1zM8 4v8L3 8zM8 4v8l5-4zM13 3h2v10h-2z" fill="#222" stroke="none" />
            </Svg>
          </button>
          <input
            aria-label="Current frame"
            defaultValue="0"
            className="h-[13px] w-[42px] border border-[#ddd] border-t-2 border-t-[#555] border-l-[#555] bg-[#dadada] pl-px"
          />
          <Spinner />
          <button aria-label="Time configuration">
            <Svg className="size-[11px]">
              <path d="M1 1h12v11H1zM1 4h12" fill="#c9d6ea" stroke="#345" />
              <path d="M8 8h7v7H8zM10 11h3" fill="#eee" />
            </Svg>
          </button>
        </div>
      </div>
      <div className="mr-[2px] grid w-[61px] shrink-0 grid-cols-4 items-center justify-items-center pb-px">
        <button aria-label="Zoom">
          <Svg className="size-[12px]">
            <circle cx="6" cy="6" r="4" fill="#e4e4e4" />
            <path d="m7 9 3 6M13 1v6M10 4h6" strokeWidth="1.500" />
          </Svg>
        </button>
        <button aria-label="Zoom all">
          <Svg className="size-[12px]">
            <path d="M1 1h14v12H1zM8 1v12M1 7h14" />
            <circle cx="9" cy="7" r="3" fill="#eee" />
            <path d="m11 9 4 5" strokeWidth="2" />
          </Svg>
        </button>
        <button aria-label="Zoom extents">
          <Svg className="size-[12px]">
            <path d="M1 4V1h3M12 1h3v3M15 12v3h-3M4 15H1v-3" />
            <path d="m4 6 2-2h6v6l-2 2H4z" fill="#6f9a69" stroke="#234a20" />
          </Svg>
        </button>
        <button aria-label="Zoom extents all">
          <Svg className="size-[12px]">
            <path d="M5 1h10v10M1 6h9v9H1zM1 10.500h9M5.500 6v9" />
            <path d="M7 3h6v5" fill="#6f9a69" stroke="#234a20" />
          </Svg>
        </button>
        <button aria-label="Field of view">
          <Svg className="size-[12px]">
            <path d="m2 2 12 6-12 6M5 4q3 4 0 8" stroke="#555" />
          </Svg>
        </button>
        <button aria-label="Pan">
          <Svg className="size-[13px]">
            <path d="M5 9V4q1-1 2 0V2q1-1 2 0v1q1-1 2 0v2q2-1 2 1v4q-1 5-4 5-3 0-4-3L2 9q1-2 3 0z" fill="#fff" />
          </Svg>
        </button>
        <button aria-label="Orbit">
          <Svg className="size-[12px]">
            <path d="M8 1v8M8 9l-6 5M8 9l6 2" stroke="#111" strokeWidth="1.500" />
            <path d="M4 5q-4 4 0 6t9-1" stroke="#3b7a35" strokeWidth="1.500" />
          </Svg>
        </button>
        <button aria-label="Maximize viewport">
          <Svg className="size-[12px]">
            <path d="M1 1h9v9H1zM5 5h10v10H5z" fill="#eee" />
            <path d="m7 7 5 5M12 9v3H9" stroke="#111" />
          </Svg>
        </button>
      </div>
    </div>
  );
}

/* ---------- windows taskbar ---------- */

function Task({ label, running = false, active = false, children }: { label: string; running?: boolean; active?: boolean; children: ReactNode }) {
  return (
    <button aria-label={label} className={`flex h-full w-[31px] flex-col items-center ${active ? "bg-[#4a5a66]" : ""}`}>
      <span className="flex flex-1 items-center">{children}</span>
      <span className={`h-px ${active ? "w-full" : "w-[23px]"} ${running || active ? "bg-[#76b9ed]" : ""}`} />
    </button>
  );
}

function Taskbar() {
  return (
    <footer className="flex h-[24px] shrink-0 items-center bg-linear-to-r from-[#223640] via-[#1f3544] to-[#1a2741] font-['Open_Sans',sans-serif] text-[10px] text-white">
      <button aria-label="Start" className="flex w-[27px] justify-center pr-[4px]">
        <Svg className="size-[15px]">
          <path d="m1 3 6-1v5.500H1zM8 2l7-1v6.500H8zM1 8.500h6V14l-6-1zM8 8.500h7V15l-7-1z" fill="#fff" stroke="none" />
        </Svg>
      </button>
      <Task label="Search">
        <Svg className="size-[15px]">
          <circle cx="9.500" cy="6" r="4.500" stroke="#fff" strokeWidth="1.500" />
          <path d="m6 9.500-5 5.500" stroke="#fff" strokeWidth="1.500" />
        </Svg>
      </Task>
      <Task label="File Explorer">
        <Svg className="size-[14px]">
          <path d="M1 2h5l1 2h8v10H1z" fill="#f3ce55" stroke="none" />
          <path d="M4 9h8v5h-2v-2H6v2H4z" fill="#3a9bdc" stroke="none" />
          <path d="M1 6h14v2H1z" fill="#fbe69a" stroke="none" />
        </Svg>
      </Task>
      <Task label="Calculator">
        <Svg className="size-[15px]">
          <path d="M3 1h10v14H3z" fill="#fff" stroke="none" />
          <path d="M5 3h6v2H5zM5 7h1.500v1.500H5zM7.500 7H9v1.500H7.500zM10 7h1.500v1.500H10zM5 9.500h1.500V11H5zM7.500 9.500H9V11H7.500zM10 9.500h1.500V11H10zM5 12h1.500v1.500H5zM7.500 12H9v1.500H7.500zM10 12h1.500v1.500H10z" fill="#223640" stroke="none" />
        </Svg>
      </Task>
      <Task label="Winamp">
        <Svg className="size-[14px]">
          <path d="M2 9 8 2l3 2 4-1-2 5-5 6-3-2-4 1z" fill="#ef9b34" stroke="#8a4c10" />
          <path d="m4 10 5-6v4l3-2-5 7V9z" fill="#fff" stroke="#a8641c" />
        </Svg>
      </Task>
      <Task label="VLC">
        <Svg className="size-[14px]">
          <path d="M7 1h2l3 10H4zM2 11h12l1 4H1z" fill="#f08a24" stroke="none" />
          <path d="M6 4h4l1 3H5z" fill="#fff" stroke="none" />
        </Svg>
      </Task>
      <Task label="WhatsApp">
        <Svg className="size-[15px]">
          <path d="m1 15 1-4q-2-6 3-9 6-2 9 3 2 6-3 9-3 1-6 0z" fill="#fff" stroke="none" />
          <circle cx="8.200" cy="7.800" r="5.800" fill="#2fb84c" stroke="none" />
          <path d="M6 5q-1 2 1.500 4.500T11.500 11" stroke="#fff" strokeWidth="2" />
        </Svg>
      </Task>
      <Task label="Acrobat Reader">
        <Svg className="size-[14px]">
          <path d="M1 1h14v14H1z" fill="#b5150f" stroke="none" />
          <path d="M3 12q5-2 5-8 0 5 6 6-6-1-11 2z" stroke="#fff" />
        </Svg>
      </Task>
      <Task label="3ds Max" active>
        <Svg className="size-[16px]">
          <path d="M1 1h14v14H1z" fill="#c9e9ee" stroke="none" />
          <path d="M3 3h7l3 3-3 2 3 3-3 3H4l4-3-3-2 3-3-5-1z" fill="#117f8c" stroke="none" />
        </Svg>
      </Task>
      <Task label="Media player" running>
        <Svg className="size-[14px]">
          <circle cx="8" cy="8" r="7" fill="#224a94" stroke="none" />
          <path d="M5 3Q1 8 5 13M11 3q4 5 0 10" stroke="#6f9ce0" strokeWidth="2" />
          <circle cx="8" cy="8" r="2" fill="#dcebff" stroke="none" />
        </Svg>
      </Task>
      <Task label="Chrome" running>
        <Svg className="size-[14px]">
          <circle cx="8" cy="8" r="7" fill="#f2c32e" stroke="none" />
          <path d="M8 8 2 4.500Q4 1 8 1t6 3.500H8z" fill="#db4437" stroke="none" />
          <path d="M8 8 2 4.500Q0 8 2 11.500T7 15z" fill="#2c9f5b" stroke="none" />
          <circle cx="8" cy="8" r="3" fill="#4787ed" stroke="#fff" />
        </Svg>
      </Task>
      <Task label="Screen recorder" running>
        <Svg className="size-[14px]">
          <circle cx="8" cy="8" r="6.500" fill="#111" stroke="#ddd" />
          <circle cx="8" cy="8" r="4" fill="#e02a2a" stroke="none" />
        </Svg>
      </Task>
      <div className="ml-auto flex h-full items-center">
        <Svg className="h-[15px] w-[12px]" box="0 0 12 16">
          <path d="M3 0v4M9 0v4" stroke="#fff" strokeWidth="1.500" />
          <path d="M1 4h10v6q-1 3-4 3v3H5v-3q-3 0-4-3z" fill="#fff" stroke="none" />
          <path d="M6 11 2.500 7.500Q3 5 6 6.500 9 5 9.500 7.500z" fill="#52a935" stroke="none" />
        </Svg>
        <span className="ml-px flex h-[15px] w-[27px] items-center justify-center border border-white bg-linear-to-r from-[#2eaa5d] from-55% to-[#5d4a4e] to-55% text-[9px] leading-[12px]">
          55%
        </span>
        <span className="mr-[7px] h-[7px] w-[2px] bg-white" />
        <button aria-label="Show hidden icons">
          <Svg className="size-[12px]">
            <path d="m2 11 6-6 6 6" stroke="#fff" strokeWidth="1.500" />
          </Svg>
        </button>
        <Svg className="ml-[7px] size-[14px]">
          <path d="M5 5.500h9v6H5zM14.500 7v3" stroke="#fff" />
          <path d="M6 7h3v3H6zM1 3h4v4q-2 2-4 0z" fill="#fff" stroke="none" />
        </Svg>
        <Svg className="ml-[6px] size-[13px]">
          <path d="M2 14Q2 3 14 2M6 14q0-7 8-8M10 14q0-4 4-4" stroke="#dde" strokeWidth="1.500" />
          <circle cx="13" cy="13" r="1.500" fill="#fff" stroke="none" />
        </Svg>
        <Svg className="ml-[6px] size-[15px]">
          <path d="M1 6h3l4-3v10l-4-3H1zM10 6q1.500 2 0 4M12 4q3 4 0 8M14 3q3 5 0 10" stroke="#fff" />
        </Svg>
        <span className="ml-[8px] w-[33px]">ENG</span>
        <span className="w-[52px]">2:53 PM</span>
        <Svg className="size-[15px]">
          <path d="M1 1h14v11h-5v3l-3-3H1z" fill="#fff" stroke="none" />
          <path d="M3 4h10M3 6.500h10M3 9h6" stroke="#1a2741" />
        </Svg>
        <span className="mr-[2px] ml-[16px] h-full w-px bg-[#5a6578]" />
      </div>
    </footer>
  );
}

function Watermark() {
  return (
    <div className="absolute top-0 right-[11px] z-20 h-[81px] w-[152px]">
      <svg viewBox="0 0 152 81" className="block h-full w-full" fill="none">
        <path d="M0 81V35l31-12v-6h78l43 16v48z" fill="#fff" />
        <path d="m3 35 28-11V13h13" stroke="#111" strokeWidth="1.500" />
        <path d="M4 66.500h145" stroke="#444" />
      </svg>
      <p className="absolute top-[45px] left-[4px] font-['Open_Sans',sans-serif] text-[21px] leading-[20px] whitespace-nowrap text-black">
        SAMEH <b>ZALAT</b>
      </p>
      <p className="absolute top-[68px] left-[4px] font-['Open_Sans',sans-serif] text-[8px] leading-[10px] text-[#333]">
        ARCHITE
      </p>
    </div>
  );
}

export default function App() {
  return (
    <div className="relative flex h-screen flex-col overflow-hidden bg-[#b9b9b9]">
      <TitleBar />
      <AppButton />
      <nav className="flex h-[18px] shrink-0 items-center gap-[15px] bg-linear-to-b from-[#e0e0e0] to-[#bcbcbc] pl-[33px] font-['Open_Sans',sans-serif] text-[10px] text-[#222]">
        {MENUS.map((m) => (
          <button key={m}>{m}</button>
        ))}
      </nav>
      <Toolbar />
      <Ribbon />
      <main className="flex min-h-0 flex-1">
        <div className="flex min-w-0 flex-1 flex-col">
          <Viewport />
          <TimeSlider />
          <TrackBar />
        </div>
        <CommandPanel />
      </main>
      <StatusBar />
      <Taskbar />
      <Watermark />
    </div>
  );
}
